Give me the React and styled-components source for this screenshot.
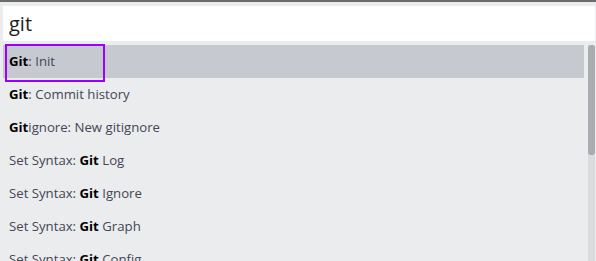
import styled, { createGlobalStyle } from "styled-components";

const Global = createGlobalStyle`
    html, body {
        margin: 0;
        padding: 0;
        background: #ebecee;
        overflow: hidden;
    }
    body {
        font-family: "Open Sans", "Noto Sans", sans-serif;
    }
`;

const Palette = styled.div`
    height: 261px;
    border-top: 2px solid #6b6d69;
    padding: 4px 1px 0 3px;
    display: flex;
    flex-direction: column;
    gap: 4px;
    box-sizing: border-box;
    overflow: hidden;
`;

const Search = styled.div`
    height: 35px;
    background: #ffffff;
    display: flex;
    align-items: center;
    padding-left: 6px;
    font-size: 20px;
    color: #1e1e1e;
    flex-shrink: 0;
`;

const Results = styled.div`
    display: grid;
    grid-template-columns: 1fr 7px;
    gap: 4px;
    flex: 1;
    min-height: 0;
`;

const List = styled.div`
    display: flex;
    flex-direction: column;
`;

const Row = styled.div`
    position: relative;
    height: 33px;
    flex-shrink: 0;
    display: flex;
    align-items: center;
    padding: 0 0 2px 6px;
    box-sizing: border-box;
    font-size: 13.2px;
    color: #444654;
    background: ${(p) => (p.$active ? "#c7c9d1" : "transparent")};
`;

const Label = styled.span`
    white-space: pre;
`;

const Match = styled.b`
    color: #000;
    font-weight: 700;
`;

const Focus = styled.div`
    position: absolute;
    left: 2px;
    top: -1px;
    width: 100px;
    height: 38px;
    border: 2px solid #9b00ff;
    box-sizing: border-box;
    pointer-events: none;
`;

const Track = styled.div`
    background: #dadbdd;
    display: flex;
    flex-direction: column;
`;

const Thumb = styled.div`
    height: 110px;
    background: #abacb1;
    border-radius: 3px;
`;

const items = [
    ["", "Git", ": Init"],
    ["", "Git", ": Commit history"],
    ["", "Git", "ignore: New gitignore"],
    ["Set Syntax: ", "Git", " Log"],
    ["Set Syntax: ", "Git", " Ignore"],
    ["Set Syntax: ", "Git", " Graph"],
    ["Set Syntax: ", "Git", " Config"],
];

const App = () => {
    return (
        <>
            <Global />
            <Palette>
                <Search>git</Search>
                <Results>
                    <List>
                        {items.map(([pre, hit, post], i) => (
                            <Row key={i} $active={i === 0}>
                                <Label>
                                    {pre}
                                    <Match>{hit}</Match>
                                    {post}
                                </Label>
                                {i === 0 && <Focus />}
                            </Row>
                        ))}
                    </List>
                    <Track>
                        <Thumb />
                    </Track>
                </Results>
            </Palette>
        </>
    );
};

export default App;
